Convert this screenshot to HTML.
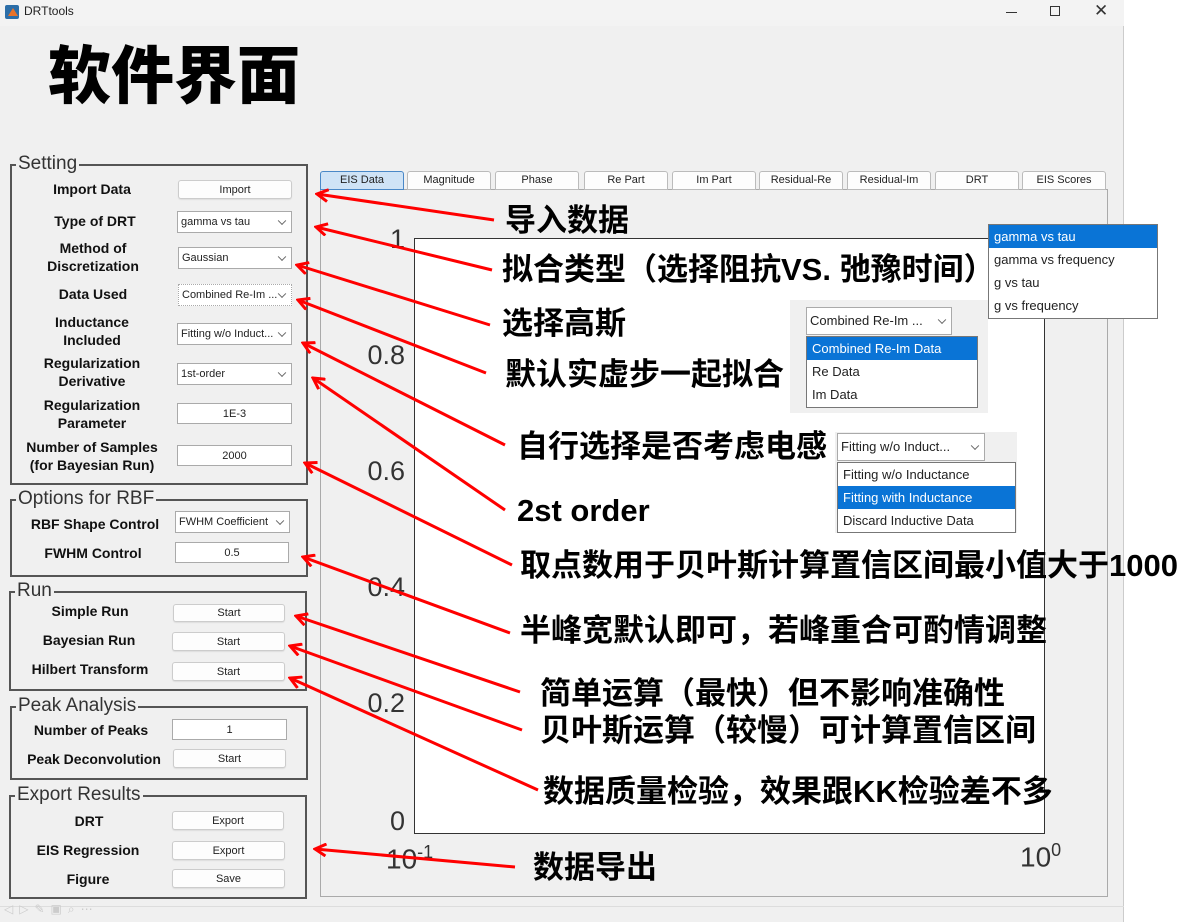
<!DOCTYPE html>
<html><head><meta charset="utf-8"><style>
*{margin:0;padding:0;box-sizing:border-box}
body{width:1192px;height:922px;position:relative;overflow:hidden;background:#fff;font-family:"Liberation Sans",Arial,sans-serif}
.a{position:absolute}
.win{left:0;top:0;width:1124px;height:922px;background:#f0f0f0;border-right:1px solid #ccc}
.tb{left:0;top:0;width:1124px;height:26px;background:#f3f3f3}
.grp{position:absolute;border:2px solid #555}
.gt{position:absolute;top:-12px;left:4px;background:#f0f0f0;font-size:19px;color:#333;padding:0 2px;line-height:20px}
.lb{position:absolute;font-weight:bold;font-size:14px;text-align:center;color:#111;line-height:18px;width:170px}
.bt{position:absolute;background:#fdfdfd;border:1px solid #ccc;border-radius:3px;font-size:11px;text-align:center;color:#222;box-shadow:0 1px 1px #ddd}
.dd{position:absolute;background:#fff;border:1px solid #aaa;font-size:11px;color:#222;padding-left:3px}
.dd:after{content:"";position:absolute;right:6px;top:50%;width:5px;height:5px;border-right:1px solid #666;border-bottom:1px solid #666;transform:translateY(-70%) rotate(45deg)}
.ed{position:absolute;background:#fff;border:1px solid #aaa;font-size:11px;color:#222;text-align:center}
.tab{position:absolute;top:171px;height:19px;width:84px;background:#fdfdfd;border:1px solid #bbb;border-radius:3px 3px 0 0;font-size:11px;text-align:center;line-height:17px;color:#222}
.yl{position:absolute;font-size:27px;color:#333;text-align:right;width:60px;left:345px}
.cn{position:absolute;font-family:"Liberation Sans","Noto Sans CJK SC",sans-serif;font-weight:bold;font-size:31px;color:#000;white-space:nowrap;line-height:36px}
.menu{position:absolute;background:#fff;border:1px solid #777;font-size:13px;color:#222}
.menu div{height:23px;line-height:23px;padding-left:5px}
.sel{background:#0a74d6;color:#fff}
</style></head><body>
<div class="a win"></div>
<div class="a tb"></div>
<div class="a" style="left:5px;top:5px;width:14px;height:14px;background:#2c6ea8;border-radius:2px"></div>
<div class="a" style="left:8px;top:8px;width:0;height:0;border-left:5px solid transparent;border-right:5px solid transparent;border-bottom:8px solid #e8732a"></div>
<div class="a" style="left:24px;top:4px;font-size:12px;color:#222">DRTtools</div>
<div class="a" style="left:1006px;top:12px;width:11px;height:1px;background:#333"></div>
<div class="a" style="left:1050px;top:6px;width:10px;height:10px;border:1px solid #333"></div>
<div class="a" style="left:1094px;top:1px;font-size:17px;color:#333">✕</div>

<div class="a" style="left:48px;top:40px;font-family:'Liberation Sans','Noto Sans CJK SC',sans-serif;font-weight:900;font-size:63px;line-height:74px;color:#000">软件界面</div>

<!-- Setting -->
<div class="grp" style="left:10px;top:164px;width:298px;height:321px"><div class="gt">Setting</div></div>
<div class="lb" style="left:7px;top:180px">Import Data</div>
<div class="bt" style="left:178px;top:180px;width:114px;height:19px;line-height:18px">Import</div>
<div class="lb" style="left:10px;top:212px">Type of DRT</div>
<div class="dd" style="left:177px;top:211px;width:115px;height:22px;line-height:20px">gamma vs tau</div>
<div class="lb" style="left:8px;top:239px">Method of<br>Discretization</div>
<div class="dd" style="left:178px;top:247px;width:114px;height:22px;line-height:20px">Gaussian</div>
<div class="lb" style="left:8px;top:285px">Data Used</div>
<div class="dd" style="left:178px;top:284px;width:114px;height:22px;line-height:20px;border-style:dotted">Combined Re-Im ...</div>
<div class="lb" style="left:7px;top:313px">Inductance<br>Included</div>
<div class="dd" style="left:177px;top:323px;width:115px;height:22px;line-height:20px">Fitting w/o Induct...</div>
<div class="lb" style="left:7px;top:354px">Regularization<br>Derivative</div>
<div class="dd" style="left:177px;top:363px;width:115px;height:22px;line-height:20px">1st-order</div>
<div class="lb" style="left:7px;top:396px">Regularization<br>Parameter</div>
<div class="ed" style="left:177px;top:403px;width:115px;height:21px;line-height:20px">1E-3</div>
<div class="lb" style="left:7px;top:438px">Number of Samples<br>(for Bayesian Run)</div>
<div class="ed" style="left:177px;top:445px;width:115px;height:21px;line-height:20px">2000</div>

<!-- RBF -->
<div class="grp" style="left:10px;top:499px;width:298px;height:78px"><div class="gt">Options for RBF</div></div>
<div class="lb" style="left:10px;top:515px">RBF Shape Control</div>
<div class="dd" style="left:175px;top:511px;width:115px;height:22px;line-height:20px">FWHM Coefficient</div>
<div class="lb" style="left:8px;top:544px">FWHM Control</div>
<div class="ed" style="left:175px;top:542px;width:114px;height:21px;line-height:20px">0.5</div>

<!-- Run -->
<div class="grp" style="left:9px;top:591px;width:298px;height:100px"><div class="gt">Run</div></div>
<div class="lb" style="left:5px;top:602px">Simple Run</div>
<div class="bt" style="left:173px;top:604px;width:112px;height:18px;line-height:17px">Start</div>
<div class="lb" style="left:4px;top:631px">Bayesian Run</div>
<div class="bt" style="left:172px;top:632px;width:113px;height:19px;line-height:18px">Start</div>
<div class="lb" style="left:5px;top:660px">Hilbert Transform</div>
<div class="bt" style="left:172px;top:662px;width:113px;height:19px;line-height:18px">Start</div>

<!-- Peak -->
<div class="grp" style="left:10px;top:706px;width:298px;height:74px"><div class="gt">Peak Analysis</div></div>
<div class="lb" style="left:6px;top:721px">Number of Peaks</div>
<div class="ed" style="left:172px;top:719px;width:115px;height:21px;line-height:20px">1</div>
<div class="lb" style="left:9px;top:750px">Peak Deconvolution</div>
<div class="bt" style="left:173px;top:749px;width:113px;height:19px;line-height:18px">Start</div>

<!-- Export -->
<div class="grp" style="left:9px;top:795px;width:298px;height:104px"><div class="gt">Export Results</div></div>
<div class="lb" style="left:4px;top:812px">DRT</div>
<div class="bt" style="left:172px;top:811px;width:112px;height:19px;line-height:18px">Export</div>
<div class="lb" style="left:3px;top:841px">EIS Regression</div>
<div class="bt" style="left:172px;top:841px;width:113px;height:19px;line-height:18px">Export</div>
<div class="lb" style="left:3px;top:870px">Figure</div>
<div class="bt" style="left:172px;top:869px;width:113px;height:19px;line-height:18px">Save</div>

<!-- bottom toolbar -->
<div class="a" style="left:0;top:906px;width:1124px;height:16px;border-top:1px solid #ddd"></div>
<div class="a" style="left:4px;top:902px;font-size:12px;color:#ccc;letter-spacing:6px">◁▷✎▣⌕⋯</div>

<!-- tabs & panel -->
<div class="a" style="left:320px;top:189px;width:788px;height:708px;border:1px solid #aaa;background:#f0f0f0"></div>
<div class="tab" style="left:320px;background:#cfe3f6;border-color:#4a88c7">EIS Data</div>
<div class="tab" style="left:407px">Magnitude</div>
<div class="tab" style="left:495px">Phase</div>
<div class="tab" style="left:584px">Re Part</div>
<div class="tab" style="left:672px">Im Part</div>
<div class="tab" style="left:759px">Residual-Re</div>
<div class="tab" style="left:847px">Residual-Im</div>
<div class="tab" style="left:935px">DRT</div>
<div class="tab" style="left:1022px">EIS Scores</div>

<!-- axes -->
<div class="a" style="left:414px;top:238px;width:631px;height:596px;background:#fff;border:1px solid #333"></div>
<div class="yl" style="top:224px">1</div>
<div class="yl" style="top:340px">0.8</div>
<div class="yl" style="top:456px">0.6</div>
<div class="yl" style="top:572px">0.4</div>
<div class="yl" style="top:688px">0.2</div>
<div class="yl" style="top:806px">0</div>
<div class="a" style="left:386px;top:842px;font-size:28px;color:#333">10<sup style="font-size:18px">-1</sup></div>
<div class="a" style="left:1020px;top:840px;font-size:28px;color:#333">10<sup style="font-size:18px">0</sup></div>

<!-- overlay dropdowns -->
<div class="a" style="left:790px;top:300px;width:198px;height:113px;background:#f0f0f0"></div>
<div class="dd" style="left:806px;top:307px;width:146px;height:28px;line-height:26px;font-size:13px;background:#fff">Combined Re-Im ...</div>
<div class="menu" style="left:806px;top:336px;width:172px;height:72px"><div class="sel">Combined Re-Im Data</div><div>Re Data</div><div>Im Data</div></div>

<div class="a" style="left:835px;top:432px;width:182px;height:101px;background:#f0f0f0"></div>
<div class="dd" style="left:837px;top:433px;width:148px;height:28px;line-height:26px;font-size:13px">Fitting w/o Induct...</div>
<div class="menu" style="left:837px;top:462px;width:179px;height:71px"><div>Fitting w/o Inductance</div><div class="sel">Fitting with Inductance</div><div>Discard Inductive Data</div></div>

<div class="menu" style="left:988px;top:224px;width:170px;height:95px"><div class="sel">gamma vs tau</div><div>gamma vs frequency</div><div>g vs tau</div><div>g vs frequency</div></div>

<!-- annotations -->
<div class="cn" style="left:505px;top:203px">导入数据</div>
<div class="cn" style="left:502px;top:252px">拟合类型（选择阻抗VS. 弛豫时间）</div>
<div class="cn" style="left:502px;top:306px">选择高斯</div>
<div class="cn" style="left:505px;top:357px">默认实虚步一起拟合</div>
<div class="cn" style="left:517px;top:429px">自行选择是否考虑电感</div>
<div class="cn" style="left:517px;top:493px">2st order</div>
<div class="cn" style="left:520px;top:548px">取点数用于贝叶斯计算置信区间最小值大于1000</div>
<div class="cn" style="left:520px;top:613px">半峰宽默认即可，若峰重合可酌情调整</div>
<div class="cn" style="left:540px;top:676px">简单运算（最快）但不影响准确性</div>
<div class="cn" style="left:540px;top:713px">贝叶斯运算（较慢）可计算置信区间</div>
<div class="cn" style="left:543px;top:774px">数据质量检验，效果跟KK检验差不多</div>
<div class="cn" style="left:533px;top:850px">数据导出</div>

<svg class="a" style="left:0;top:0" width="1192" height="922">
<defs><marker id="m" markerWidth="14" markerHeight="14" refX="12" refY="7" orient="auto" markerUnits="userSpaceOnUse"><path d="M1,1 L12,7 L1,13" fill="none" stroke="#f00" stroke-width="3"/></marker></defs>
<g stroke="#f00" stroke-width="3" fill="none" marker-end="url(#m)">
<line x1="494" y1="220" x2="317" y2="194"/>
<line x1="492" y1="270" x2="316" y2="227"/>
<line x1="490" y1="325" x2="297" y2="265"/>
<line x1="486" y1="373" x2="298" y2="300"/>
<line x1="505" y1="445" x2="303" y2="343"/>
<line x1="505" y1="510" x2="313" y2="378"/>
<line x1="512" y1="565" x2="305" y2="463"/>
<line x1="510" y1="633" x2="303" y2="557"/>
<line x1="520" y1="692" x2="296" y2="616"/>
<line x1="522" y1="730" x2="290" y2="646"/>
<line x1="538" y1="790" x2="290" y2="678"/>
<line x1="515" y1="867" x2="315" y2="849"/>
</g></svg>
</body></html>
